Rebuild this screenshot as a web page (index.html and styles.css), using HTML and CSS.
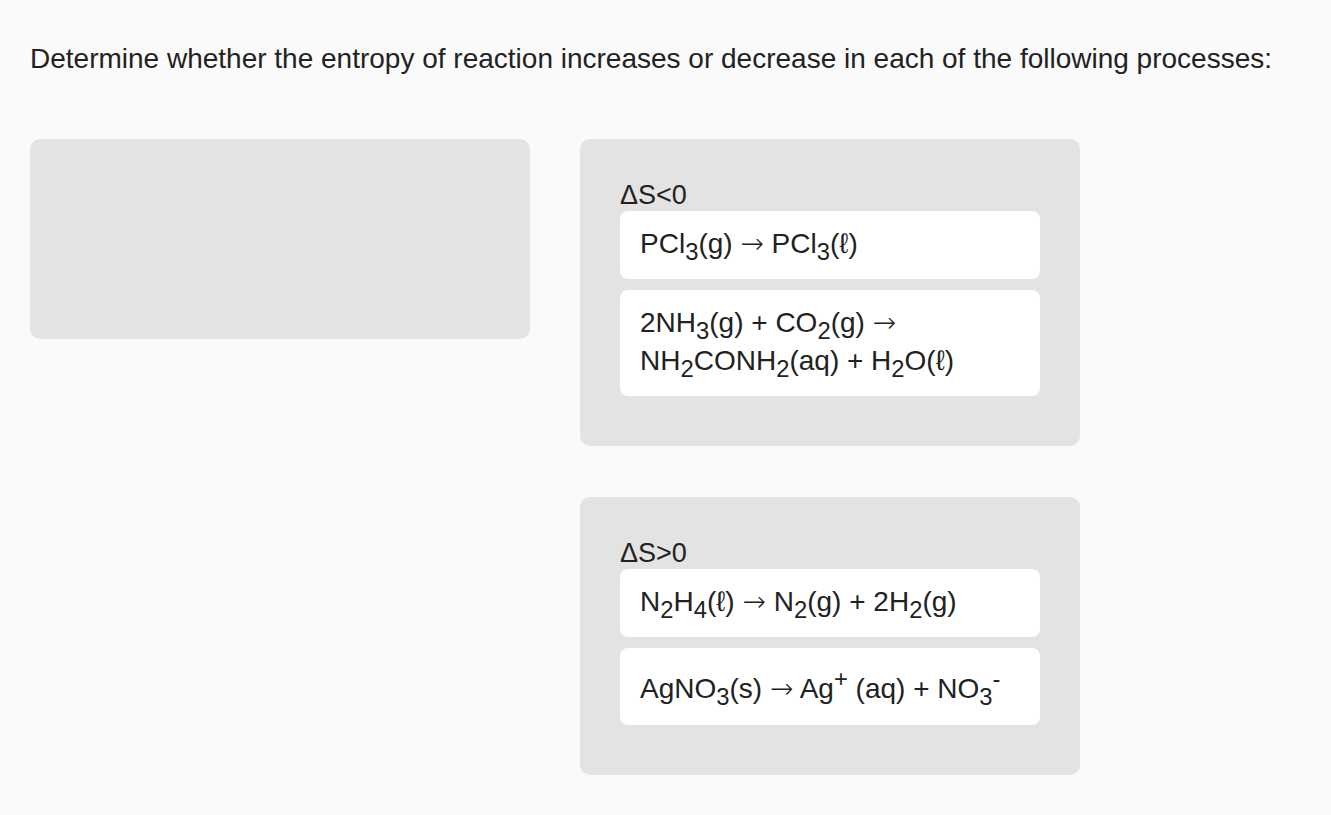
FILE: index.html
```html
<!DOCTYPE html>
<html lang="en">
<head>
<meta charset="utf-8">
<title>Entropy sorting</title>
<link rel="stylesheet" href="styles.css">
</head>
<body>
<main class="page">
  <h1 class="prompt">Determine whether the entropy of reaction increases or decrease in each of the following processes:</h1>
  <div class="board">
    <div class="col">
      <div class="pool"></div>
    </div>
    <div class="col">
      <section class="bin bin-neg">
        <div class="bin-label">ΔS&lt;0</div>
        <div class="cards">
          <div class="card">PCl<sub>3</sub>(g) <span class="arrow">→</span> PCl<sub>3</sub>(<span class="ell">ℓ</span>)</div>
          <div class="card">2NH<sub>3</sub>(g) + CO<sub>2</sub>(g) <span class="arrow">→</span><br>NH<sub>2</sub>CONH<sub>2</sub>(aq) + H<sub>2</sub>O(<span class="ell">ℓ</span>)</div>
        </div>
      </section>
      <section class="bin bin-pos">
        <div class="bin-label">ΔS&gt;0</div>
        <div class="cards">
          <div class="card">N<sub>2</sub>H<sub>4</sub>(<span class="ell">ℓ</span>) <span class="arrow">→</span> N<sub>2</sub>(g) + 2H<sub>2</sub>(g)</div>
          <div class="card card-sup">AgNO<sub>3</sub>(s) <span class="arrow">→</span> Ag<sup>+</sup> (aq) + NO<sub>3</sub><sup>-</sup></div>
        </div>
      </section>
    </div>
  </div>
</main>
</body>
</html>
```
FILE: styles.css
```css
html, body {
  margin: 0;
  padding: 0;
  background: #fafafa;
}

body {
  font-family: "Liberation Sans", Arial, "DejaVu Sans", sans-serif;
  color: #222222;
}

.page {
  padding: 43px 30px 40px 30px;
}

.prompt {
  margin: 0;
  font-size: 28px;
  font-weight: normal;
  line-height: 32px;
}

.board {
  margin-top: 64px;
  display: grid;
  grid-template-columns: 500px 500px;
  column-gap: 50px;
  align-items: start;
}

.col {
  display: flex;
  flex-direction: column;
  gap: 51px;
}

.pool {
  height: 200px;
  background: #e3e3e3;
  border-radius: 10px;
}

.bin {
  background: #e3e3e3;
  border-radius: 10px;
  padding: 40px 40px 50px 40px;
}

.bin-label {
  font-size: 27px;
  line-height: 32px;
}

.cards {
  display: flex;
  flex-direction: column;
  gap: 11px;
}

.card {
  background: #ffffff;
  border-radius: 8px;
  padding: 14px 20px 16px 20px;
  font-size: 28px;
  line-height: 38px;
}

.card-sup {
  padding-top: 22px;
  padding-bottom: 17px;
}

.card sub,
.card sup {
  font-size: 0.85em;
  line-height: 0;
}

.card sub {
  vertical-align: -0.3em;
}

.card sup {
  vertical-align: 0.45em;
}

.arrow {
  font-family: "DejaVu Sans", sans-serif;
  font-weight: 200;
}
```
